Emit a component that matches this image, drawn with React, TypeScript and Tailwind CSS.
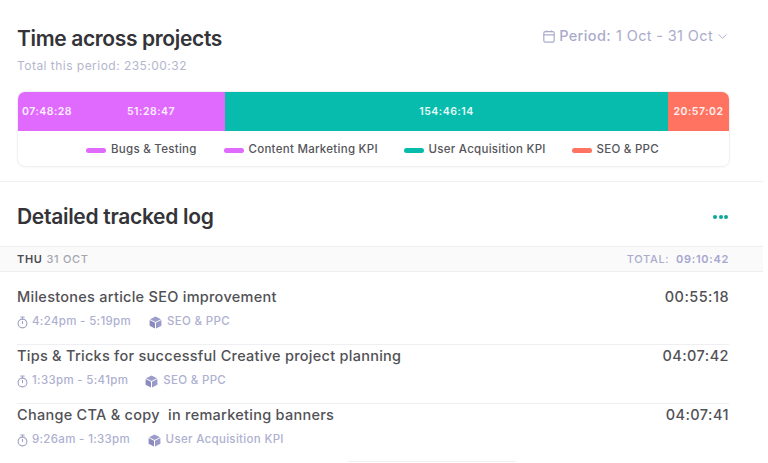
import { ChevronDown } from "lucide-react";

const Stopwatch = () => (
  <svg width="11" height="13" viewBox="0 0 11 13" fill="none" stroke="#9fa1c4" strokeWidth="1.1" strokeLinecap="round" className="shrink-0">
    <circle cx="5.5" cy="7.5" r="4.4" />
    <path d="M3.8 1h3.4M5.5 1v2M5.5 7.6V5.2" />
  </svg>
);

const Box = () => (
  <svg width="13" height="13" viewBox="0 0 13 13" className="shrink-0">
    <path d="M6.5.4 12 3.2 6.5 6 1 3.2z" fill="#9d9dcc" />
    <path d="M.6 4 6 6.8v5.8L.6 9.8z" fill="#8b8bbf" />
    <path d="M12.4 4 7 6.8v5.8l5.4-2.8z" fill="#9a9aca" />
  </svg>
);

const CalendarIcon = () => (
  <svg width="12" height="13" viewBox="0 0 12 13" fill="none" stroke="#a9abcb" strokeWidth="1.2" className="shrink-0">
    <rect x="0.8" y="1.6" width="10.4" height="10.6" rx="1.6" />
    <path d="M0.8 4.8h10.4M3.5 0.4v1.8M8.5 0.4v1.8" />
  </svg>
);

const segments = [
  { w: "w-[81px]", color: "bg-[#e069fe]", label: "07:48:28", cls: "pl-[4px]" },
  { w: "w-[126px]", color: "bg-[#e069fe]", label: "51:28:47", cls: "pl-[28px]" },
  { w: "w-[443px]", color: "bg-[#07bcad]", label: "154:46:14", cls: "justify-center" },
  { w: "flex-1", color: "bg-[#ff7360]", label: "20:57:02", cls: "justify-center" },
];

const legend = [
  { color: "bg-[#e069fe]", label: "Bugs & Testing", w: "w-[137.5px]" },
  { color: "bg-[#e069fe]", label: "Content Marketing KPI", w: "w-[180px]" },
  { color: "bg-[#07bcad]", label: "User Acquisition KPI", w: "w-[168px]" },
  { color: "bg-[#ff7360]", label: "SEO & PPC", w: "" },
];

const rows = [
  { title: "Milestones article SEO improvement", time: "4:24pm - 5:19pm", project: "SEO & PPC", dur: "00:55:18", gap: "ml-[18px]" },
  { title: "Tips & Tricks for successful Creative project planning", time: "1:33pm - 5:41pm", project: "SEO & PPC", dur: "04:07:42", gap: "ml-[17px]" },
  { title: "Change CTA & copy\u00a0 in remarketing banners", time: "9:26am - 1:33pm", project: "User Acquisition KPI", dur: "04:07:41", gap: "ml-[17.5px]" },
];

export default function App() {
  return (
    <div className="w-[768px] h-[463px] overflow-hidden bg-white text-[#3d3d42] font-['Inter','Liberation_Sans',sans-serif]">
      <div className="w-[763px] border-b border-[#f0f0f4] h-[182px] pt-[25px] pl-[17px] pr-[33px]">
        <div className="flex items-start justify-between">
          <h1 className="text-[21px] leading-[28px] font-semibold tracking-[-0.35px] text-[#333338]">Time across projects</h1>
          <div className="flex items-center h-[22px] text-[14.5px] text-[#a9abcb] tracking-[0.36px]">
            <span className="ml-[1px]"><CalendarIcon /></span>
            <span className="font-medium ml-[4px] mr-[5px]">Period:</span>
            <span>1 Oct - 31 Oct</span>
            <ChevronDown size={15} strokeWidth={1.5} className="ml-[2px]" />
          </div>
        </div>
        <p className="mt-[5px] text-[12px] leading-[16px] tracking-[0.47px] text-[#b4b6ce]">Total this period: 235:00:32</p>
        <div className="mt-[17px] w-[713px] h-[76px] rounded-[8px] border border-[#f0f0f4] overflow-hidden shadow-[0_1px_2px_rgba(60,60,90,0.04)]">
          <div className="flex h-[39px]">
            {segments.map((s) => (
              <div key={s.label} className={`${s.w} ${s.color} ${s.cls} flex items-center text-[10.5px] font-semibold tracking-[0.5px] text-white/90`}>
                {s.label}
              </div>
            ))}
          </div>
          <div className="flex h-[35px] items-center pt-[3px] pl-[68px] text-[11.5px] font-medium tracking-[0.27px] text-[#55555b]">
            {legend.map((l) => (
              <div key={l.label} className={`flex items-center ${l.w}`}>
                <span className={`${l.color} w-[20px] h-[5px] rounded-full mr-[5px]`} />
                {l.label}
              </div>
            ))}
          </div>
        </div>
      </div>
      <div className="flex w-[763px] h-[64px] items-start justify-between pt-[21px] pl-[17px] pr-[34px]">
        <h2 className="text-[21px] leading-[28px] font-semibold tracking-[-0.3px] text-[#333338]">Detailed tracked log</h2>
        <div className="flex gap-[1.5px] mt-[12px] mr-[1px]">
          <span className="w-[4px] h-[4px] rounded-full bg-[#0aa899]" />
          <span className="w-[4px] h-[4px] rounded-full bg-[#0aa899]" />
          <span className="w-[4px] h-[4px] rounded-full bg-[#0aa899]" />
        </div>
      </div>
      <div className="flex w-[763px] h-[26px] items-center justify-between border-y border-[#eeeef2] bg-[#fafafb] pl-[17px] pr-[34px] text-[11px] tracking-[0.7px]">
        <div>
          <span className="font-semibold text-[#4a4a50]">THU</span>{" "}
          <span className="font-medium text-[#a6a6ae]">31 OCT</span>
        </div>
        <div className="text-[#aaaccb] font-medium">
          TOTAL: <span className="ml-[3px] font-semibold text-[#a7a6cf]">09:10:42</span>
        </div>
      </div>
      <div className="mt-[14px] pl-[17px] w-[729px]">
        {rows.map((r, i) => (
          <div key={r.title} className={`h-[59px] pt-[1px] ${i < 2 ? "border-b border-[#efeff3]" : ""}`}>
            <div className="flex justify-between items-center h-[20px] text-[14.5px] font-medium tracking-[0.27px] text-[#515156]">
              <span>{r.title}</span>
              <span className="tracking-[0.45px]">{r.dur}</span>
            </div>
            <div className="flex items-center mt-[6px] h-[18px] text-[11.5px] font-medium tracking-[0.32px] text-[#aeb0d0]">
              <Stopwatch />
              <span className="ml-[4px]">{r.time}</span>
              <span className={`${r.gap} mr-[5px]`}><Box /></span>
              <span>{r.project}</span>
            </div>
            {i === 2 && <div className="mt-[12px] ml-[331px] w-[168px] h-px bg-[#f0f0f4]" />}
          </div>
        ))}
      </div>
    </div>
  );
}
